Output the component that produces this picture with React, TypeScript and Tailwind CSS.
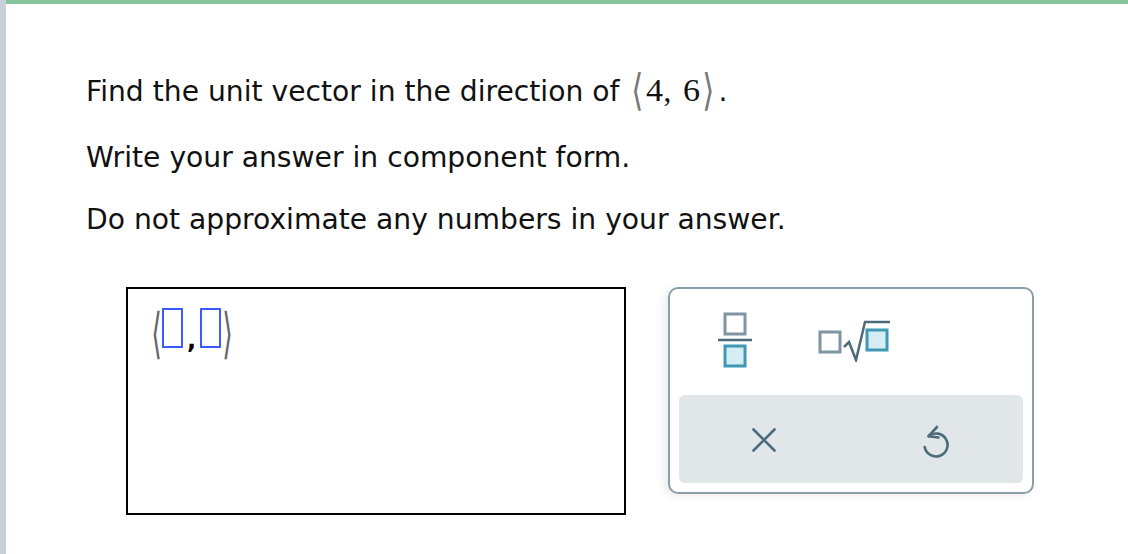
import { FC } from "react";

const Frac: FC = () => (
  <svg width="34" height="56" viewBox="0 0 34 56">
    <rect x="7" y="2" width="20" height="20" fill="none" stroke="#7f959f" strokeWidth="3" />
    <line x1="0" y1="28" x2="34" y2="28" stroke="#4b6b78" strokeWidth="2.5" />
    <rect x="7" y="34" width="20" height="20" fill="#d5edf3" stroke="#3f98b4" strokeWidth="3" />
  </svg>
);

const Sqrt: FC = () => (
  <svg width="72" height="42" viewBox="0 0 72 42">
    <rect x="2" y="12" width="20" height="20" fill="none" stroke="#7f959f" strokeWidth="3" />
    <path d="M26 27 L31 22 L38 40 L47 2 L72 2" fill="none" stroke="#4b6b78" strokeWidth="2.5" />
    <rect x="49" y="10" width="20" height="20" fill="#d5edf3" stroke="#3f98b4" strokeWidth="3" />
  </svg>
);

const Times: FC = () => (
  <svg width="24" height="24" viewBox="0 0 24 24">
    <path d="M1.5 1.5 L22.5 22.5 M22.5 1.5 L1.5 22.5" stroke="#4b6b78" strokeWidth="2.6" strokeLinecap="round" />
  </svg>
);

const Undo: FC = () => (
  <svg width="30" height="40" viewBox="0 0 30 40">
    <path
      d="M4.7 26 A11.5 11.5 0 1 0 8.6 15.2"
      fill="none"
      stroke="#4b6b78"
      strokeWidth="2.6"
      strokeLinecap="round"
    />
    <path
      d="M17 6 L8.6 15.2 L18.5 16.5"
      fill="none"
      stroke="#4b6b78"
      strokeWidth="2.6"
      strokeLinecap="round"
      strokeLinejoin="round"
    />
  </svg>
);

const mathBracket = "inline-block w-[14px] text-center text-[#777] text-[31px] scale-y-[1.4]";
const digit = "inline-block w-[17px] text-center scale-x-[1.1]";

const App: FC = () => {
  return (
    <div className="flex w-[1128px] h-[554px] bg-white overflow-hidden">
      <div className="w-[6px] bg-[#c5d1d8] shrink-0" />
      <div className="flex-1 flex flex-col">
        <div className="h-[4px] bg-[#86c49a]" />
        <div
          className="pl-[80px] pt-[72px] text-[28.2px] text-[#111] leading-[28px]"
          style={{ fontFamily: '"DejaVu Sans", Verdana, sans-serif' }}
        >
          <p className="h-[28px] whitespace-nowrap">
            Find the unit vector in the direction of{" "}
            <span
              className="text-[31px] leading-[28px] ml-[2px]"
              style={{ fontFamily: '"Liberation Serif", "DejaVu Serif", serif' }}
            >
              <span className={mathBracket} style={{ fontFamily: '"DejaVu Sans", sans-serif' }}>
                ⟨
              </span>
              <span className={`${digit} ml-[2px]`}>4</span>
              <span className="inline-block w-[8px]">,</span>
              <span className={`${digit} ml-[12px]`}>6</span>
              <span className={`${mathBracket} ml-[1px]`} style={{ fontFamily: '"DejaVu Sans", sans-serif' }}>
                ⟩
              </span>
            </span>
            <span className="ml-[3px]">.</span>
          </p>
          <p className="mt-[40px] h-[28px]">Write your answer in component form.</p>
          <p className="mt-[34px] h-[28px]">Do not approximate any numbers in your answer.</p>

          <div className="flex mt-[53px] ml-[40px] gap-[42px] items-start">
            <div className="w-[500px] h-[228px] border-2 border-black pl-[22px] pt-[19px] shrink-0">
              <div
                className="flex items-start text-[#666] leading-[40px]"
                style={{ fontFamily: '"DejaVu Sans", sans-serif' }}
              >
                <span className="inline-block w-[12px] text-[34px] scale-y-[1.6] scale-x-[0.8] translate-y-[5px]">⟨</span>
                <span className="w-[21px] h-[40px] border-2 border-[#3b5bfd]" />
                <span className="w-[17px] text-center text-[24px] text-black font-bold leading-none pt-[20px]">,</span>
                <span className="w-[21px] h-[40px] border-2 border-[#3b5bfd]" />
                <span className="inline-block w-[12px] text-[34px] scale-y-[1.6] scale-x-[0.8] translate-y-[5px]">⟩</span>
              </div>
            </div>

            <div className="w-[366px] h-[207px] border-2 border-[#8a9ea8] rounded-[10px] shadow-[-4px_2px_8px_rgba(0,0,0,0.08)] flex flex-col px-[9px] pb-[9px] shrink-0">
              <div className="flex items-center h-[106px] pt-[2px]">
                <div className="ml-[39px] -mt-[6px]">
                  <Frac />
                </div>
                <div className="ml-[66px] -mt-[4px]">
                  <Sqrt />
                </div>
              </div>
              <div className="flex-1 bg-[#e1e6e9] rounded-[6px] flex items-center">
                <div className="ml-[73px] mt-[2px]">
                  <Times />
                </div>
                <div className="ml-[144px] mt-[3px]">
                  <Undo />
                </div>
              </div>
            </div>
          </div>
        </div>
      </div>
    </div>
  );
};

export default App;
